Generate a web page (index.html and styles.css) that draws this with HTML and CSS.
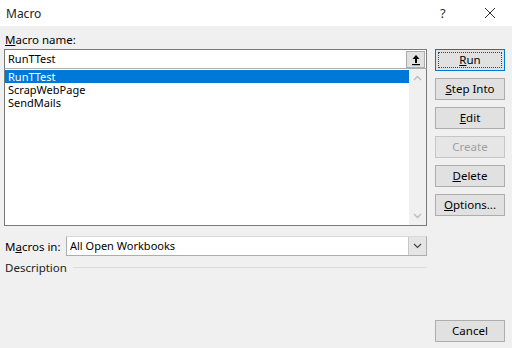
FILE: index.html
```html
<!DOCTYPE html>
<html>
<head>
<meta charset="utf-8">
<link rel="stylesheet" href="styles.css">
</head>
<body>
<div class="dialog">
  <div class="titlebar">
    <span class="title">Macro</span>
    <span class="tb-help">?</span>
    <span class="tb-close">
      <svg width="12" height="12" viewBox="0 0 12 12"><path d="M1 1 L11 11 M11 1 L1 11" stroke="#333" stroke-width="1" fill="none"/></svg>
    </span>
  </div>
  <div class="content">
    <div class="main">
      <div class="left">
        <div class="label"><u>M</u>acro name:</div>
        <div class="namebox">
          <div class="nameinput">RunTTest</div>
          <div class="upbtn">
            <svg width="10" height="12" viewBox="0 0 10 12"><path d="M5 1 L1.5 5 H4 V9 H6 V5 H8.5 Z" fill="#000"/><rect x="1" y="10" width="8" height="1.2" fill="#000"/></svg>
          </div>
        </div>
        <div class="list">
          <div class="items">
            <div class="item sel">RunTTest</div>
            <div class="item">ScrapWebPage</div>
            <div class="item">SendMails</div>
          </div>
          <div class="scroll">
            <svg width="9" height="6" viewBox="0 0 9 6"><path d="M1 5 L4.5 1.5 L8 5" stroke="#bbb" stroke-width="1.3" fill="none"/></svg>
            <svg width="9" height="6" viewBox="0 0 9 6"><path d="M1 1 L4.5 4.5 L8 1" stroke="#bbb" stroke-width="1.3" fill="none"/></svg>
          </div>
        </div>
        <div class="inrow">
          <span class="inlabel">M<u>a</u>cros in:</span>
          <div class="select">
            <div class="selval">All Open Workbooks</div>
            <div class="selbtn">
              <svg width="9" height="6" viewBox="0 0 9 6"><path d="M1 1 L4.5 4.5 L8 1" stroke="#444" stroke-width="1.2" fill="none"/></svg>
            </div>
          </div>
        </div>
        <div class="descrow">
          <span>Description</span>
          <div class="rule"></div>
        </div>
      </div>
      <div class="buttons">
        <div class="btn primary"><span class="focus"><u>R</u>un</span></div>
        <div class="btn"><u>S</u>tep Into</div>
        <div class="btn"><u>E</u>dit</div>
        <div class="btn disabled">Create</div>
        <div class="btn"><u>D</u>elete</div>
        <div class="btn"><u>O</u>ptions...</div>
      </div>
    </div>
    <div class="footer">
      <div class="btn">Cancel</div>
    </div>
  </div>
</div>
</body>
</html>
```

FILE: styles.css
```css
html, body {
  margin: 0;
  padding: 0;
}
body {
  width: 512px;
  height: 348px;
  background: #f0f0f0;
  font-family: "Noto Sans", "DejaVu Sans", sans-serif;
  font-size: 11.5px;
  color: #000;
  overflow: hidden;
}
.dialog {
  width: 512px;
  height: 348px;
  display: flex;
  flex-direction: column;
}
.titlebar {
  height: 26px;
  background: #fff;
  display: flex;
  align-items: center;
  padding-left: 6px;
  box-sizing: border-box;
}
.title {
  flex: 1;
  font-size: 12px;
  color: #222;
}
.tb-help {
  width: 14px;
  margin-right: 30px;
  font-size: 13px;
  color: #333;
}
.tb-close {
  width: 12px;
  margin-right: 16px;
  display: flex;
}
.content {
  flex: 1;
  display: flex;
  flex-direction: column;
  padding: 6px 7px 6px 4px;
}
.main {
  display: flex;
  gap: 8px;
}
.left {
  width: 423px;
  display: flex;
  flex-direction: column;
}
.label {
  padding-left: 1px;
  height: 17px;
  line-height: 16px;
}
.namebox {
  height: 19px;
  background: #fff;
  border: 1px solid #7a7a7a;
  border-bottom: none;
  display: flex;
  box-sizing: border-box;
}
.nameinput {
  flex: 1;
  padding-left: 3px;
  line-height: 18px;
  font-size: 11px;
}
.upbtn {
  width: 19px;
  margin: 1px 1px 0 0;
  background: #e1e1e1;
  border: 1px solid #adadad;
  box-sizing: border-box;
  display: flex;
  align-items: center;
  justify-content: center;
}
.list {
  height: 158px;
  background: #fff;
  border: 1px solid #7a7a7a;
  border-top: 1px solid #adadad;
  box-sizing: border-box;
  display: flex;
}
.items {
  flex: 1;
  padding-top: 1px;
  font-size: 11px;
}
.item {
  height: 13px;
  line-height: 13px;
  padding-left: 3px;
}
.item.sel {
  background: #0078d7;
  color: #fff;
}
.scroll {
  width: 17px;
  background: #f0f0f0;
  display: flex;
  flex-direction: column;
  justify-content: space-between;
  align-items: center;
  padding: 6px 0 6px;
}
.inrow {
  margin-top: 10px;
  display: flex;
  align-items: center;
}
.inlabel {
  width: 61px;
  padding-left: 1px;
}
.select {
  flex: 1;
  height: 20px;
  background: #fff;
  border: 1px solid #adadad;
  border-top-color: #d9d9d9;
  box-sizing: border-box;
  display: flex;
}
.selval {
  flex: 1;
  padding-left: 3px;
  line-height: 18px;
  font-size: 11px;
}
.selbtn {
  width: 17px;
  background: #e5e5e5;
  border-left: 1px solid #c8c8c8;
  display: flex;
  align-items: center;
  justify-content: center;
}
.descrow {
  margin-top: 4px;
  display: flex;
  align-items: center;
  gap: 6px;
  padding-left: 1px;
}
.descrow span {
  color: #222;
}
.rule {
  flex: 1;
  height: 1px;
  background: #dcdcdc;
}
.buttons {
  padding-top: 17px;
  display: flex;
  flex-direction: column;
  gap: 7px;
}
.btn {
  width: 70px;
  height: 22px;
  box-sizing: border-box;
  background: #e1e1e1;
  border: 1px solid #adadad;
  display: flex;
  align-items: center;
  justify-content: center;
  line-height: 1;
}
.btn.primary {
  border: 1px solid #0078d7;
  padding: 2px;
}
.btn.primary .focus {
  flex: 1;
  align-self: stretch;
  display: flex;
  align-items: center;
  justify-content: center;
  border: 1px dotted #444;
}
.btn.disabled {
  color: #a0a0a0;
  background: #e6e6e6;
  border-color: #c6c6c6;
}
.footer {
  margin-top: auto;
  display: flex;
  justify-content: flex-end;
}
```
